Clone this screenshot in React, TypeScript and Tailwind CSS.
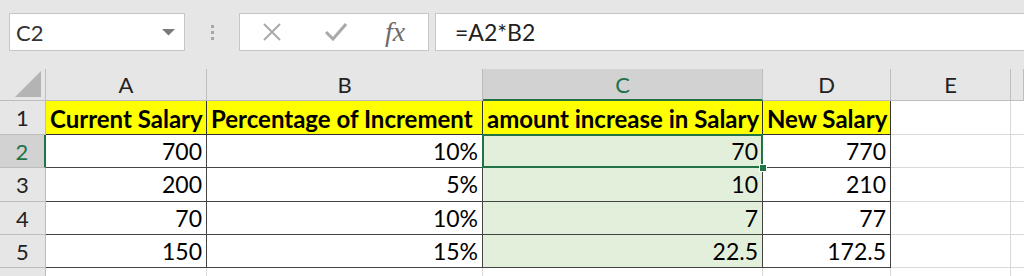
import React from "react";

const font = { fontFamily: "Lato, 'Noto Sans', sans-serif" };

const cols = ["A", "B", "C", "D", "E", ""];

const rows = [
  { n: "2", a: "700", b: "10%", c: "70", d: "770" },
  { n: "3", a: "200", b: "5%", c: "10", d: "210" },
  { n: "4", a: "70", b: "10%", c: "7", d: "77" },
  { n: "5", a: "150", b: "15%", c: "22.5", d: "172.5" },
];

const rowH = ["h-[34px]", "h-[33px]", "h-[34px]", "h-[33px]", "h-[33px]"];

function FormulaBar() {
  return (
    <div className="flex h-[69px] items-start bg-[#e6e6e6] pt-[13px]">
      <div className="ml-[9px] flex h-[38px] w-[176px] items-center justify-between border border-[#c6c6c6] bg-white pl-[6px] pr-[9px]">
        <span className="text-[22px] text-[#333]">C2</span>
        <svg width="13" height="7" viewBox="0 0 13 7">
          <path d="M0 0 L13 0 L6.5 6.5 Z" fill="#7a7a7a" />
        </svg>
      </div>
      <div className="flex h-[38px] w-[54px] flex-col items-center justify-center gap-[3px]">
        <span className="h-[3px] w-[3px] bg-[#a6a6a6]" />
        <span className="h-[3px] w-[3px] bg-[#a6a6a6]" />
        <span className="h-[3px] w-[3px] bg-[#a6a6a6]" />
      </div>
      <div className="flex h-[38px] w-[190px] items-center border border-[#c6c6c6] bg-white">
        <svg className="ml-[22px]" width="20" height="20" viewBox="0 0 20 20">
          <path d="M2 2 L18 18 M18 2 L2 18" stroke="#a9a9a9" strokeWidth="2" />
        </svg>
        <svg className="ml-[43px]" width="22" height="18" viewBox="0 0 22 18">
          <path d="M1 9 L8 16 L21 1" stroke="#a9a9a9" strokeWidth="3" fill="none" />
        </svg>
        <span
          className="ml-[38px] text-[28px] italic leading-none text-[#6b6b6b]"
          style={{ fontFamily: "'Liberation Serif', serif" }}
        >
          fx
        </span>
      </div>
      <div className="ml-[6px] flex h-[38px] flex-1 items-center border border-[#c6c6c6] border-r-0 bg-white pl-[19px]">
        <span className="text-[23px] text-[#222]">=A2*B2</span>
      </div>
    </div>
  );
}

export default function App() {
  return (
    <div className="h-[276px] w-[1024px] overflow-hidden bg-white" style={font}>
      <FormulaBar />
      <div className="grid grid-cols-[46px_161px_276px_280px_128px_120px_1fr]">
        {/* column headers */}
        <div className="relative h-[32px] border-r border-b border-[#bdbdbd] bg-[#e6e6e6]">
          <svg className="absolute right-[4px] bottom-[3px]" width="26" height="26" viewBox="0 0 26 26">
            <path d="M26 0 L26 26 L0 26 Z" fill="#b4b4b4" />
          </svg>
        </div>
        {cols.map((c) =>
          c === "C" ? (
            <div
              key={c}
              className="flex h-[32px] items-center justify-center border-r border-b-2 border-r-[#bdbdbd] border-b-[#217346] bg-[#d2d2d2] text-[22px] text-[#217346]"
            >
              {c}
            </div>
          ) : (
            <div
              key={c || "f"}
              className="flex h-[32px] items-center justify-center border-r border-b border-[#bdbdbd] bg-[#e6e6e6] text-[22px] text-[#222]"
            >
              {c}
            </div>
          )
        )}

        {/* row 1 */}
        <div className={`${rowH[0]} flex items-center justify-center border-r border-b border-[#bdbdbd] bg-[#e6e6e6] text-[22px] text-[#222]`}>
          1
        </div>
        {["Current Salary", "Percentage of Increment", "amount increase in Salary", "New Salary"].map((t) => (
          <div
            key={t}
            className={`${rowH[0]} flex items-center overflow-hidden whitespace-nowrap border-r border-b border-[#333] bg-[#ffff00] pl-[4px] pt-[2px] text-[24px] font-bold text-black`}
          >
            {t}
          </div>
        ))}
        <div className={`${rowH[0]} border-r border-b border-[#d9d9d9]`} />
        <div className={`${rowH[0]} border-b border-[#d9d9d9]`} />

        {rows.map((r, i) => {
          const h = rowH[i + 1];
          const sel = i === 0;
          return (
            <React.Fragment key={r.n}>
              <div
                className={`${h} flex items-center justify-center border-b border-[#bdbdbd] text-[22px] ${
                  sel
                    ? "border-r-2 border-r-[#217346] bg-[#d2d2d2] text-[#217346]"
                    : "border-r border-r-[#bdbdbd] bg-[#e6e6e6] text-[#222]"
                }`}
              >
                {r.n}
              </div>
              <div className={`${h} flex items-center justify-end border-r border-b border-[#444] pr-[4px] text-[23px] text-black`}>
                {r.a}
              </div>
              <div className={`${h} flex items-center justify-end border-r border-b border-[#444] pr-[4px] text-[23px] text-black`}>
                {r.b}
              </div>
              <div
                className={`${h} relative flex items-center justify-end border-r border-b border-[#444] bg-[#e2efda] pr-[4px] text-[23px] text-black`}
              >
                {sel && (
                  <>
                    <div className="absolute -top-[1px] -left-[1px] -right-[1px] -bottom-[1px] border-2 border-[#217346]" />
                    <div className="absolute -right-[5px] -bottom-[5px] z-10 h-[8px] w-[8px] border border-white bg-[#217346]" />
                  </>
                )}
                <span className="relative">{r.c}</span>
              </div>
              <div className={`${h} flex items-center justify-end border-r border-b border-[#444] pr-[4px] text-[23px] text-black`}>
                {r.d}
              </div>
              <div className={`${h} border-r border-b border-[#d9d9d9]`} />
              <div className={`${h} border-b border-[#d9d9d9]`} />
            </React.Fragment>
          );
        })}

        {/* row 6 partial */}
        <div className="h-[33px] border-r border-[#bdbdbd] bg-[#e6e6e6]" />
        {[0, 1, 2, 3, 4].map((k) => (
          <div key={k} className="h-[33px] border-r border-[#d9d9d9]" />
        ))}
        <div className="h-[33px]" />
      </div>
    </div>
  );
}
